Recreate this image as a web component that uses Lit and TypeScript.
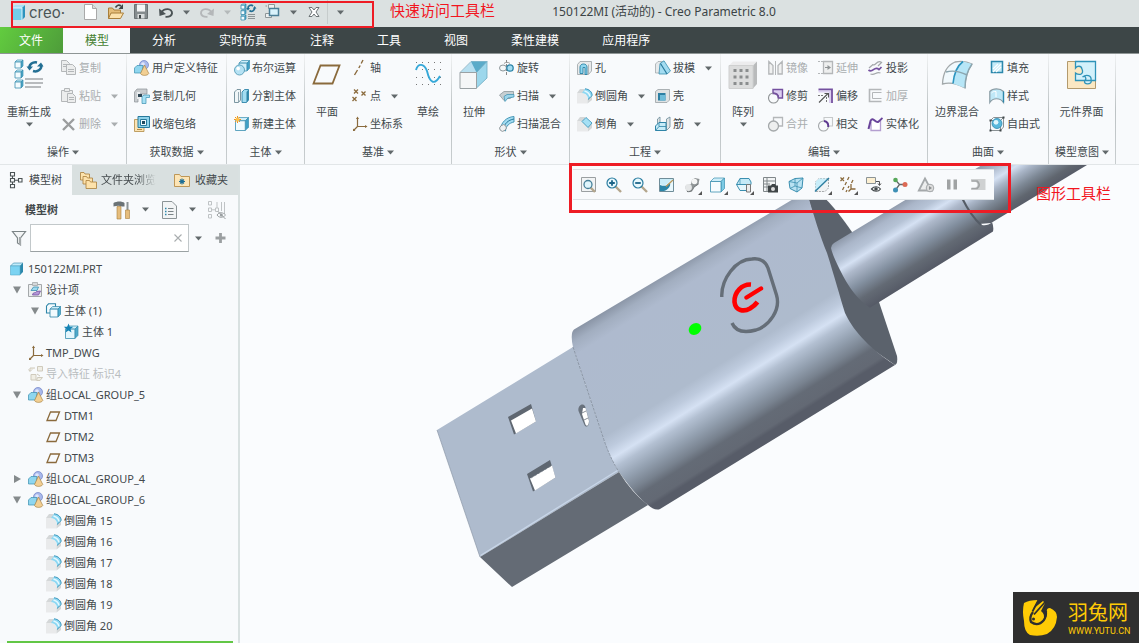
import { LitElement, html, svg, css, nothing, TemplateResult, SVGTemplateResult } from "lit";
import { customElement, property } from "lit/decorators.js";
import { classMap } from "lit/directives/class-map.js";

interface Command { label: string; icon: string; menu?: boolean; off?: boolean; }
interface Group { label: string; columns: (Command | Command[])[]; }
interface Node { label: string; icon: string; level: number; open?: boolean; off?: boolean; }

const BE = "#3a8fb0";
const BR = "#8a6a3c";
const GY = "#b4b7b9";

/* A cube seen from the front-left, shared by many glyphs. */
const cube = (x: number, y: number, s: number, front = "#f4fbfe", side = "#4fa9cb", line = BE) => {
  const d = s * 0.25;
  return svg`
    <path d="M${x} ${y + d} L${x + d} ${y} H${x + s} L${x + s - d} ${y + d} Z" fill="#cfeef9" stroke=${line} stroke-width=".7"/>
    <path d="M${x + s - d} ${y + d} L${x + s} ${y} V${y + s - d} L${x + s - d} ${y + s} Z" fill=${side} stroke=${line} stroke-width=".7"/>
    <path d="M${x} ${y + d} H${x + s - d} V${y + s} H${x} Z" fill=${front} stroke=${line} stroke-width=".8"/>`;
};

const xMark = (x: number, y: number, s: number, c: string, w: number) =>
  svg`<path d="M${x} ${y} l${s} ${s} M${x + s} ${y} l${-s} ${s}" stroke=${c} stroke-width=${w}/>`;

const corner = svg`<path d="M18 14 V18 H14 Z" fill="#555"/>`;

const lens = svg`<path d="M9.500 9.500 L15 15" stroke="#b3a58c" stroke-width="2.400"/>`;

const csys = svg`<path d="M5.500 2 V10.500 H14 M5.500 10.500 L2 14" fill="none" stroke=${BR} stroke-width="1.200"/>
  <path d="M4 3 L5.500 .5 L7 3 M13 9 L15.500 10.500 L13 12 M1 12.500 V15 H3.500" fill=${BR}/>`;

const glyphs: Record<string, SVGTemplateResult> = {
  app: svg`<path d="M1 4 L4 1 H14 L11 4 Z" fill="#a8e2f5"/><path d="M11 4 L14 1 V13 L11 16 Z" fill="#2b93bd"/><path d="M1 4 H11 V16 H1 Z" fill="#74cdea"/><path d="M1 4 H11 V16" fill="none" stroke="#dff6fd"/>`,
  new: svg`<path d="M1.500 .5 H9.500 L13.500 4.500 V15.500 H1.500 Z" fill="#fff" stroke="#a9a9a9"/><path d="M9.500 .5 V4.500 H13.500" fill="#ddd" stroke="#a9a9a9"/>`,
  open: svg`<path d="M.5 14.500 V4 H4.500 L6 6 H12.500 V9" fill="#e5bd78" stroke="#a97f3b"/><path d="M3 9 H15.500 L12.500 14.500 H.5 Z" fill="#fde2ab" stroke="#a97f3b"/><path d="M7.500 3.500 C9 1 11 .5 13 2" stroke="#3f4747" stroke-width="1.600" fill="none"/><path d="M15 0 V5 H10.500 Z" fill="#3f4747"/>`,
  save: svg`<path d="M1.500 .5 H14.500 V14.500 H1.500 Z" fill="#858c8e" stroke="#6a7173"/><path d="M4 .5 H12 V7.500 H4 Z" fill="#f4f5f5"/><path d="M4.500 10 H11.500 V14.500 H4.500 Z" fill="#d8dcdc"/><path d="M6 11 H8 V14.500 H6 Z" fill="#3f4648"/>`,
  undo: svg`<path d="M3 9 C6 3.500 14.500 4 14 9.500 C13.500 12 11 13 7.500 12.800" fill="none" stroke="#4b5355" stroke-width="1.900"/><path d="M1 4.500 L1.500 12 L8 10 Z" fill="#4b5355"/>`,
  redo: svg`<path d="M13 9 C10 3.500 1.500 4 2 9.500 C2.500 12 5 13 8.500 12.800" fill="none" stroke=${GY} stroke-width="1.900"/><path d="M15 4.500 L14.500 12 L8 10 Z" fill=${GY}/>`,
  regen: svg`${cube(1, 0, 5)}${cube(1, 5.5, 5)}${cube(1, 11, 5)}<path d="M8 10.500 H15 M8 12.500 H15 M8 14.500 H15" stroke="#8c9496"/><path d="M8 4.500 A3 3 0 0 1 13 2 M14.500 4 A3 3 0 0 1 9.500 6.500" fill="none" stroke="#236f93" stroke-width="1.700"/><path d="M6 4 H10 L8 6.500 Z M13 4.500 H16.500 L14.500 2 Z" fill="#236f93"/>`,
  windows: svg`<path d="M3.500 .5 H9.500 V4.500 H3.500 Z M.5 2 H2 M.5 9.500 H6.500 V13.500 H.5 Z" fill="#eef1f1" stroke="#8f9798"/><path d="M4.500 4.500 H13.500 V11.500 H4.500 Z" fill="#d8f2fb" stroke="#4b7f97" stroke-width="1.500"/>`,
  closeWin: svg`<path d="M3 3.500 H6 L8 6 L10 3.500 H13 L10 8 L13 12.500 H10 L8 10 L6 12.500 H3 L6 8 Z" fill="#fff" stroke="#6d7476"/>`,
  copy: svg`<g fill="#eceded" stroke=${GY}><path d="M.5 .5 H5.500 L8.500 3.500 V11.500 H.5 Z"/><path d="M5.500 4.500 H11.500 L14.500 7.500 V14.500 H5.500 Z"/></g><path d="M2 4.500 H6 M2 6.500 H5 M7 9.500 H13 M7 11.500 H13" stroke=${GY}/>`,
  paste: svg`<g fill="#eceded" stroke=${GY}><path d="M.5 2.500 H11.500 V13.500 H.5 Z"/><path d="M3.500 .5 H8.500 V3.500 H3.500 Z"/><path d="M6.500 5.500 H11.500 L14.500 8.500 V14.500 H6.500 Z"/></g><path d="M8 9.500 H13 M8 11.500 H13" stroke=${GY}/>`,
  del: xMark(2, 3, 11, "#9b9d9e", 2.4),
  udf: svg`<circle cx="10" cy="5" r="4.500" fill="#a9b9ec" stroke="#6d7fc4" stroke-width=".7"/><circle cx="9" cy="4" r="1.800" fill="#dfe6fb"/><path d="M.5 8 L3 5.500 H9 L8 13 H.5 Z" fill="#8fd6ef" stroke=${BE} stroke-width=".7"/><path d="M10.500 5 L14.800 13.500 C13.500 16 7.500 16 6.500 13.500 Z" fill="#f2cf93" stroke="#ab8748" stroke-width=".7"/>`,
  copyGeom: svg`<path d="M.5 4 L3 1 H13 V6 H4 V14 H.5 Z" fill="#c9cdd0" stroke="#8b9195" stroke-width=".7"/><path d="M3 4 H6 V11 H3 Z" fill="#e9ecee"/><path d="M4 6 H8 V9 H4 Z" fill="#2e4654"/><path d="M8 8.500 L10 7 H15.500 V9.500 H12 V15.500 H8 Z" fill="#a6e0f4" stroke=${BE} stroke-width=".7"/>`,
  shrink: svg`<path d="M.5 3.500 H10 V15.500 H.5 Z" fill="#fbe3b4" stroke="#b08a45" stroke-width=".8"/><path d="M4 .5 H15.500 V11.500 H4 Z" fill="#8fd2ea" stroke="#287a9c"/><path d="M6.500 3.500 H12.500 V9.500 H6.500 Z" fill="#eef9fd" stroke="#287a9c"/><path d="M8 5 H11 V8 H8 Z" fill="#1e4b60"/><path d="M3 13.500 H8" stroke="#b08a45"/>`,
  bool: svg`${cube(5, 0.5, 10.5, "#d3effa", "#3fa0c6")}<circle cx="5.500" cy="10" r="5" fill="#b6e2f4" stroke="#4893b0" stroke-width=".8"/><circle cx="4.200" cy="8.600" r="1.800" fill="#fff"/>`,
  split: svg`<path d="M.5 4 L3 1.500 H6.500 V12 L4.500 14.500 H.5 Z" fill="#f0f6f8" stroke="#6d8a96" stroke-width=".9"/><path d="M4.500 4 V14" stroke="#6d8a96" stroke-width=".7"/><path d="M8 4 L10.500 1.500 H14.500 V12 L12.500 14.500 H8 Z" fill="#a3dcf1" stroke="#2f85a8" stroke-width=".9"/><path d="M12.500 4 L14.500 1.500 V12 L12.500 14.500 Z" fill="#2f85a8"/>`,
  newBody: svg`${cube(1.5, 1.5, 13, "#f2fbfe", "#3fa0c6")}<path d="M3.500 0 V7 M0 3.500 H7 M1 1 L6 6 M6 1 L1 6" stroke="#f0931e" stroke-width="1"/><circle cx="3.500" cy="3.500" r="1.900" fill="#ffc04a"/>`,
  axis: svg`<path d="M2.500 15 L5.500 10 M6.800 8 L8.200 5.500 M9.200 3.500 L11 0" stroke=${BR} stroke-width="1.400"/>`,
  point: svg`${xMark(2, 1.5, 4, BR, 1.3)}${xMark(9.5, 3.5, 4, BR, 1.3)}${xMark(.5, 9, 4, BR, 1.3)}`,
  csys,
  revolve: svg`<path d="M7.500 0 V16" stroke="#888" stroke-dasharray="3 1"/><ellipse cx="4" cy="8" rx="3.500" ry="3" fill="#f4f7f8" stroke="#8d979b"/><ellipse cx="11" cy="8" rx="3.200" ry="3.200" fill="#a3dcf1" stroke="#2f85a8" stroke-width="1.300"/><path d="M5 3.500 C6 2 10 2 11 3.500" fill="none" stroke="#999"/>`,
  sweep: svg`<path d="M.5 7 L5 3.500 H14.500 V8 L11 10.500 H8 L5 12.500 Z" fill="#c6cfd2" stroke="#8d979b" stroke-width=".8"/><path d="M5 8.500 L8 6.500 H15 V9 L9 10 L6 13.500 Z" fill="#9dd5ea" stroke=${BE} stroke-width=".7"/>`,
  blend: svg`<path d="M1.500 13 C2 7 7 1 15 .5 V6 C10 7 7 10 6.500 15 Z" fill="#a3dcf1" stroke=${BE} stroke-width=".9"/><path d="M4.500 13 C5 8 9 4 15 3" fill="none" stroke="#287a9c"/><ellipse cx="4" cy="12" rx="3.500" ry="3" transform="rotate(-40 4 12)" fill="#f0f1f2" stroke="#8d979b" stroke-width=".9"/>`,
  hole: svg`<path d="M.5 4.500 L3 1.500 H14.500 V11 L11.500 14.500 H.5 Z" fill="#e8eaeb" stroke="#9aa1a4" stroke-width=".8"/><path d="M3 13.500 V7 C3 3 10 3 10 7 V14.500 H8 V7.500 H6 V13.500 Z" fill="#8fd6ef" stroke="#2682a6" stroke-width=".9"/><path d="M11.500 4.500 V14" stroke="#9aa1a4" stroke-width=".7"/>`,
  round: svg`<path d="M0 5 H6 C9 6 10.500 8 10.500 11 V15.500 H0 Z" fill="#e9eaeb"/><path d="M0 5 L3 1 H8 L6 5 Z M10.500 11 L15 7 V12 L10.500 15.500 Z" fill="#d4d7d8"/><path d="M5 5 L8 .8 C12.500 1.200 15 4 15.200 7.500 L11 11.500 C11 8 9 5.500 5 5 Z" fill="#8ed8f3"/><path d="M8 .8 C12.500 1.200 15 4 15.200 7.500 L11 11.500" fill="none" stroke="#2f8fb5" stroke-width=".9"/><path d="M7.500 3 C11 4 12.500 5.500 13 8.500" fill="none" stroke="#e4f8ff" stroke-width="1.500"/>`,
  chamfer: svg`<path d="M0 5 H6 L11 10.500 V15.500 H0 Z" fill="#e9eaeb"/><path d="M0 5 L3 1 H9 L6 5 Z M11 11 L15 7 V12 L11 15.500 Z" fill="#d4d7d8"/><path d="M5 5.500 L9 1.500 L15 7 L11 11.500 Z" fill="#a5e0f5" stroke="#2f8fb5" stroke-width=".8"/>`,
  draft: svg`<path d="M.5 4 L3 1.500 H9 L7 13 H.5 Z" fill="#e6eaec" stroke="#9aa1a4" stroke-width=".7"/><path d="M5 3.500 L9 .8 L15.500 11 L12 14 H4 Z" fill="#a3dcf1" stroke=${BE} stroke-width=".8"/><path d="M5.500 3.500 L12 14" stroke="#287a9c" stroke-width="1.200"/>`,
  shell: svg`<path d="M.5 3.500 L3 1.500 H14.500 V12 L12 14.500 H.5 Z" fill="#dfe2e3" stroke="#9aa1a4" stroke-width=".8"/><path d="M3 5 H10.500 V12.500 H3 Z" fill="#2d7fa3"/><path d="M5 7 H10.500 V12.500 H5 Z" fill="#6fbcd9"/>`,
  rib: svg`<path d="M2.500 9 V3 L5 1 V8 Z M11.500 8 V3 L15 1 V11 L11.500 14.500 Z" fill="#e2e5e6" stroke="#6b8c99" stroke-width=".8"/><path d="M.5 10 L4 6.500 H11 V14.500 H.5 Z" fill="#c7ecf8" stroke="#2f85a8"/><path d="M4 6.500 V10.500 L.5 14.500 M4 10.500 H11" fill="none" stroke="#2f85a8" stroke-width=".8"/>`,
  mirror: svg`<path d="M.8 1.500 L5 5.500 V14 H.8 Z M14.200 1.500 L10 5.500 V14 H14.200 Z" fill="#f0f1f1" stroke=${GY} stroke-width="1.300"/><path d="M7.500 1 V15" stroke=${GY}/>`,
  trim: svg`<path d="M5 1.500 H14.500 V10 H10.500 C10.500 7.500 9 5.500 5 5.500 Z" fill="#dccff0" stroke="#74509f" stroke-width="1.400"/><circle cx="5.500" cy="10" r="5" fill="none" stroke="#8e9294" stroke-width="1.100"/><path d="M5 5 C9 5 10.500 7.500 10.500 10.500" fill="none" stroke="#74509f" stroke-width="1.500"/>`,
  merge: svg`<path d="M5.500 5 V1.500 H14.500 V10 H10" fill="none" stroke=${GY} stroke-width="1.300"/><circle cx="5.500" cy="10" r="5" fill="#eeefef" stroke="#a4a8aa" stroke-width="1.300"/>`,
  extend: svg`<path d="M5.500 1.500 H14.500 V13.500 H5.500 Z" fill="#eeefef" stroke=${GY} stroke-width="1.300"/><path d="M0 1.500 H5 M0 13.500 H5" stroke=${GY} stroke-dasharray="2 1"/><path d="M7 7.500 H12" stroke="#8f9395"/><path d="M9.500 5 L13 7.500 L9.500 10 Z" fill="#8f9395"/>`,
  offset: svg`<path d="M.5 1.500 H14 V15" fill="none" stroke="#74509f" stroke-width="1.800"/><path d="M.5 3.500 H12 V15" fill="none" stroke="#dccff0" stroke-width="2"/><path d="M0 7.500 H6 M8.500 9 V15" stroke="#777" stroke-dasharray="2 1" /><path d="M1 14.500 L10 5.500 M6.500 5.500 H10.500 V9.500" fill="none" stroke="#555" stroke-width="1.100"/>`,
  intersect: svg`<path d="M6 5 V1.500 H14.500 V10 H11" fill="none" stroke="#c6c9ca" stroke-width="1.100"/><circle cx="5.500" cy="10" r="5" fill="none" stroke="#a4a8aa" stroke-width="1.100"/><path d="M6 5 C9 5.500 10.500 8 10.300 11" fill="none" stroke="#5d3890" stroke-width="2"/>`,
  project: svg`<path d="M4 4.500 C8 7 8 0 13 2 M1 8 L5 4.500 M10 6 L14 2" fill="none" stroke="#a4a8aa" stroke-width="1.200"/><path d="M.5 10 C5 14 6 5 11 9.500 L13.500 7" fill="none" stroke="#74509f" stroke-width="1.700"/><path d="M2.500 14 C7 16 8 11 12.500 13" fill="none" stroke="#a4a8aa" stroke-width="1.200"/>`,
  thicken: svg`<path d="M13.500 1.500 H1.500 V13.500 H13.500" fill="none" stroke=${GY} stroke-width="1.600"/><path d="M13.500 4.500 H4.500 V10.500 H13.500" fill="none" stroke=${GY}/>`,
  solidify: svg`<path d="M3 6 V14.500 H12.500 V5" fill="#fff" stroke="#b49fd0" stroke-width="1.300"/><path d="M.5 13 L2.500 5 C5 0 7 7 10 6 C12 5 13 3 14.500 2" fill="none" stroke="#69439a" stroke-width="2"/>`,
  fill: svg`<path d="M2.500 1.500 H13.500 V12.500 H2.500 Z" fill="#c4ebf8" stroke="#2c88ac" stroke-width="1.500"/><path d="M4 9 L9 4 M4 12 L12 4 M7 12 L12 7" stroke="#fff" stroke-width="1.200"/>`,
  style: svg`<path d="M.8 14.500 V3.500 C4 0 11 0 14.500 3.500 V14.500 C11 9.500 4 9.500 .8 14.500 Z" fill="#bfe8f7" stroke="#8a9ca4" stroke-width="1.200"/><path d="M2.500 5 C4 3.500 5 3.500 7 3.500 V9" stroke="#fff" fill="none"/><path d="M14.500 3.500 V14.500" stroke="#2c88ac" stroke-width="1.300"/>`,
  freestyle: svg`<path d="M1.500 4.500 L4.500 1.500 H14.500 V11 L11.500 14.500 H1.500 Z M1.500 4.500 H11.500 V14.500 M11.500 4.500 L14.500 1.500" fill="none" stroke="#8a9194"/><circle cx="8" cy="7.500" r="5" fill="#59b8dc" stroke="#2c88ac" stroke-width=".8"/><circle cx="7" cy="6.300" r="2.400" fill="#dff5fc"/><path d="M.5 3.500 H2.500 V5.500 H.5 Z M13.500 .5 H15.500 V2.500 H13.500 Z M.5 13.500 H2.500 V15.500 H.5 Z M10.500 13.500 H12.500 V15.500 H10.500 Z" fill="#3f4648"/>`,
  tree: svg`<path d="M2.500 .5 H6.500 V4 H2.500 Z M2.500 6.500 H6.500 V10 H2.500 Z M2.500 12.500 H6.500 V15.800 H2.500 Z M10.500 6.500 H14 V10 H10.500 Z M6.500 8.300 H10.500 M4.500 4 V6.500 M4.500 10 V12.500" fill="none" stroke="#4b5355" stroke-width="1.100"/>`,
  folders: svg`<g stroke="#a97f3b" stroke-width=".8" fill="#fde2ab"><path d="M.5 .5 H4 L5 2 H9.500 V8 H.5 Z"/><path d="M3 4.500 H6.500 L7.500 6 H12.500 V12 H3 Z"/><path d="M6 8.500 H9.500 L10.500 10 H16.500 V16.500 H6 Z"/></g>`,
  favorites: svg`<path d="M.5 14.500 V2.500 H5.500 L7 4.500 H15.500 V14.500 Z" fill="#fde5b6" stroke="#b98e49" stroke-width=".9"/><path d="M8 6.500 V12.500 M5 9.500 H11 M6 7.500 L10 11.500 M10 7.500 L6 11.500" stroke="#1f6f96" stroke-width="1.100"/>`,
  hammer: svg`<path d="M3 4.500 H7 V17 H3 Z" fill="#e6bd7c" stroke="#a97f3b" stroke-width=".6"/><path d="M-.5 1 C3 -1 8 -1 10.500 1 V4.500 H8 C6 3.500 3 3.500 -.5 4.500 Z" fill="#6b7376"/><path d="M12.500 0 H14.500 V8 H12.500 Z" fill="#8c9496"/><path d="M11.500 8 H15.500 V16.500 H11.500 Z" fill="#e6bd7c" stroke="#a97f3b" stroke-width=".6"/>`,
  list: svg`<path d="M1.500 -.5 H11 L15.500 4 V16.500 H1.500 Z" fill="#f2f4f5" stroke="#8c9496"/><path d="M7 6.500 H12.500 M7 9.500 H12.500 M7 12.500 H12.500" stroke="#7b8487"/><path d="M4 5.800 H5.500 V7.200 H4 Z M4 8.800 H5.500 V10.200 H4 Z M4 11.800 H5.500 V13.200 H4 Z" fill="#2c88ac"/>`,
  treeHide: svg`<g fill="none" stroke="#bfc3c5"><path d="M.5 -.5 H3.500 V3 H.5 Z M.5 6 H3.500 V9.500 H.5 Z M.5 12.500 H3.500 V16 H.5 Z M7.500 6 H10.500 V9.500 H7.500 Z M3.500 7.800 H7.500 M9 0 V6 M13.500 0 V9 M16.500 0 V12"/></g><path d="M9 13 C11 10 15 10 17.500 13 C15 16 11 16 9 13 Z M10 9.500 L17.500 17" fill="none" stroke="#9a9fa1"/><circle cx="13.300" cy="13" r="1.500" fill="#9a9fa1"/>`,
  funnel: svg`<path d="M2.500 1.500 H15.500 L10.500 8 V15 L7.500 13 V8 Z" fill="#f3f5f6" stroke="#7d8587" stroke-width="1.200"/><path d="M9 7 H11 V15 H9 Z" fill="#a4a9ab"/>`,
  plus: svg`<path d="M8.500 3 V13 M3.500 8 H13.500" stroke="#9b9fa1" stroke-width="2.800"/>`,
  clear: xMark(4.5, 4.5, 7, "#a9adaf", 1.1),
  part: svg`<path d="M.5 5 L3.500 2 H13 L10 5 Z" fill="#c2ecfa" stroke="#2f85a8" stroke-width=".6"/><path d="M10 5 L13 2 V11 L10 14 Z" fill="#2c88ac"/><path d="M.5 5 H10 V14 H.5 Z" fill="#7cd3f2" stroke="#55abc9" stroke-width=".6"/>`,
  design: svg`<path d="M.5 2.500 H13.500 V14.500 H.5 Z" fill="#eceeef" stroke="#a4a8aa"/><path d="M4.500 .5 H9.500 V3.500 H4.500 Z" fill="#d5d8da" stroke="#a4a8aa" stroke-width=".8"/><path d="M3 8.500 L5.500 5 H10.500 L9 8.500 Z" fill="#9ed9ef" stroke=${BE} stroke-width=".8"/><path d="M4.500 13 C5.500 9 7.500 12 8.500 9.500 L12.500 9 L10.500 13 Z" fill="#b497d8" stroke="#74509f" stroke-width=".8"/>`,
  bodies: svg`<path d="M.5 3 L2.500 .8 H9.500 V10 H.5 Z" fill="#f4fbfe" stroke="#2f85a8" stroke-width="1.100"/>${cube(4, 3.5, 10.5, "#f2fbfe", "#4fb2d6", "#2f85a8")}`,
  body: svg`${cube(1.5, 2, 12.5, "#e4f6fd", "#4fa9cb")}<path d="M4.500 -.5 L5.800 2.800 H9.300 L6.500 5 L7.500 8.500 L4.500 6.500 L1.500 8.500 L2.500 5 L-.3 2.800 H3.200 Z" fill="#1583b5"/>`,
  import: svg`<g fill="#f0eee5" stroke="#cfcabc"><path d="M9.500 .5 H14.500 V5 H9.500 Z M3 8.500 H8 V14 H3 Z M9.500 11.500 H14.500 L12 14.500 H8.500 Z"/><path d="M2 5 V2 H7 M.5 3.500 L2 5.500 L4 3.500 M9 8 L12 10"/></g>`,
  plane: svg`<path d="M4.500 4 H13.500 L10 12.500 H1 Z" fill="none" stroke=${BR} stroke-width="1.300"/>`,
  refit: svg`<path d="M1.500 .5 H15.500 V14.500 H1.500 Z" fill="#f2f4f5" stroke="#9a9fa1"/><path d="M10.500 10.500 L15 15" stroke="#b3a58c" stroke-width="2.400"/><circle cx="8" cy="7.500" r="4" fill="#dff5fc" stroke="#47819a" stroke-width="1.300"/>`,
  zoomIn: svg`${lens}<circle cx="6" cy="6" r="5" fill="#e8f8fd" stroke="#2c7ea1" stroke-width="1.200"/><path d="M6 3.200 V8.800 M3.200 6 H8.800" stroke="#1b6488" stroke-width="1.800"/>`,
  zoomOut: svg`${lens}<circle cx="6" cy="6" r="5" fill="#e8f8fd" stroke="#2c7ea1" stroke-width="1.200"/><path d="M3.200 6 H8.800" stroke="#1b6488" stroke-width="1.800"/>`,
  repaint: svg`<path d="M1.500 1.500 H15.500 V14.500 H1.500 Z" fill="#e9f8fd" stroke="#6f8d99"/><path d="M2 7 C6 9 9 8 13 3 H15 V2 H2 Z" fill="#c9edf9"/><path d="M2 14 L2 8 C6 9.500 9 9 10 7 L12 6 C13 9 10 13 6 14 Z" fill="#2b86a9"/><path d="M8 9.500 L15 3" stroke="#b8975b" stroke-width="1.300"/>`,
  shade: svg`<path d="M1 10 C3 8 5 8 7 7 L8 3 L11 1 L15.500 2 L14.500 7 L10 10 L8 14.500 H3 Z" fill="#8f9496"/><circle cx="4.500" cy="10.500" r="3.400" fill="#e4e6e7"/><circle cx="10.500" cy="4.500" r="2.800" fill="#f4f5f5"/><path d="M3 14.500 C8 15.500 9 12 10 10 L14.500 7" fill="none" stroke="#6d7375"/>${corner}`,
  styleBox: svg`${cube(.5, 1, 14, "#f7fcfe", "#7dcbe5")}${corner}`,
  views: svg`<path d="M.5 7.500 L4 1.500 H13 L15 5 V7.500 Z" fill="#c5eaf7" stroke=${BE}/><path d="M.5 7.500 H11 V13.500 H4 Z" fill="#e6f6fc" stroke=${BE}/><path d="M4 1.500 V7.500" stroke=${BE} stroke-width=".7"/><path d="M10.500 7.500 H14.500 V15 H10.500 Z" fill="#eee" stroke="#777"/>${corner}`,
  viewMgr: svg`<path d="M1.500 .5 H13.500 V14.500 H1.500 Z" fill="#f2f4f5" stroke="#80878a"/><path d="M2 4 H13 M2 7 H8 M2 10 H6 M5 1 V14" stroke="#80878a"/><path d="M6 8.500 H9 L10 7 H13 L14 8.500 H16 V15.500 H6 Z" fill="#3f4547"/><circle cx="11" cy="12" r="2" fill="#ddd"/>`,
  persp: svg`<path d="M1 4.500 L7 1.500 L15 1 L14 11 L9 15 L2 11.500 Z" fill="#b9e2f2" stroke=${BE}/><path d="M1 4.500 L9 6 V15 M9 6 L15 1 M7 2 V9 L2 11.500 M7 9 L14 11" fill="none" stroke=${BE} stroke-width=".8"/>`,
  section: svg`<path d="M1.500 5 L5 1.500 H14.500 V11 L11 14.500 H1.500 Z" fill="#f1f3f4" stroke="#a4a8aa" stroke-dasharray="2 1"/><path d="M1.500 5 L5 1.500 H14 L1.500 14 Z" fill="#c9edf9"/><path d="M1 14.500 L15 1" stroke="#2c7ea1" stroke-width="1.400"/>${corner}`,
  datums: svg`${xMark(.5, .5, 3.5, BR, 1.2)}<path d="M9 0 L7.500 3 M6.500 5 L5 8 M4 10 L2.500 13 M13 3 L11.500 6 M9 9 L8 11 M7 13 L6 15 M11 7 V12 H15.500 M11 12 L8.500 14.500" fill="none" stroke=${BR} stroke-width="1.300"/>${corner}`,
  annot: svg`<path d="M.5 .5 H9.500 V6.500 H.5 Z" fill="#fdf0d2" stroke="#8c9496"/><path d="M10 4.500 H13.500 V8 M12 6.500 L13.500 8.500 L15 6.500" fill="none" stroke="#555"/><path d="M5.500 12 C8 9 12.500 9 14.500 12 C12.500 15 8 15 5.500 12 Z" fill="#fff" stroke="#454b4d" stroke-width="1.200"/><circle cx="10" cy="12" r="1.800" fill="#454b4d"/>`,
  spin: svg`<path d="M3.500 3 L7.500 7.500 L3.500 13 M7.500 7.500 H13" fill="none" stroke="#62686a" stroke-width="1.300"/><circle cx="3.500" cy="3" r="2.300" fill="#57a85a"/><circle cx="13" cy="7.500" r="2.500" fill="#dc6a55"/><circle cx="3.500" cy="13" r="2.500" fill="#3d8fb5"/>`,
  analysis: svg`<path d="M7 1.500 L13.500 13.500 H.8 Z" fill="#eceded" stroke="#a4a8aa" stroke-width="1.800"/><circle cx="12" cy="11" r="3.800" fill="#ddd" stroke="#a4a8aa"/><path d="M11 9 L14 11 L11 13 Z" fill="#8d9193"/>`,
  pause: svg`<path d="M3 2.500 H6.500 V12.500 H3 Z M9.500 2.500 H13 V12.500 H9.500 Z" fill="#a0a3a4"/>`,
  stop: svg`<path d="M1 2 H15.500 V13 H1 V11 H5 C8 10 8 5.500 5 4.500 H1 Z" fill="#cfd1d2"/><path d="M1.500 4 H7 C10 6.500 10 9 7 11.500 H1.500" fill="none" stroke="#a2a5a6" stroke-width="1.700"/>`,
};

const bigGlyphs: Record<string, SVGTemplateResult> = {
  regenBig: svg`${cube(1, 0, 8)}${cube(1, 10, 8)}${cube(1, 20, 8)}<path d="M11 19 H29 M11 23 H29 M11 27 H27" stroke="#a2a7a9" stroke-width="1.700"/><path d="M15.500 8 A6 5 0 0 1 23 2.500 M27 5 A6 5 0 0 1 19 11" fill="none" stroke="#236f93" stroke-width="2.500"/><path d="M12.500 6.500 H19 L15.500 10.500 Z M23 6.500 H29.500 L27 2.500 Z" fill="#236f93"/>`,
  planeBig: svg`<path d="M8.500 5.500 H27.500 L20.500 23.500 H1.500 Z" fill="none" stroke=${BR} stroke-width="1.800"/>`,
  sketchBig: svg`<path d="M3 2.500 H28 M3 9.500 H28 M3 17.500 H28 M3 24.500 H28" stroke="#777" stroke-width="1.100" stroke-dasharray="1 5"/><path d="M3 10 C5 3 11 3 14 11 C17 24 22 25 27 16" fill="none" stroke="#35a8d8" stroke-width="1.900"/>`,
  extrudeBig: svg`<path d="M1 12.500 L12 1.500 H28 L17.500 12.500 Z" fill="#b7dff0" stroke="#8fb3c2" stroke-width=".8"/><path d="M12 1.500 H28 L17.500 12.500 Z" fill="#5aabc9"/><path d="M17.500 12.500 L28 1.500 V18 L17.500 28 Z" fill="#9cd7ec" stroke="#6da9c0" stroke-width=".8"/><path d="M1 12.500 H17.500 V28.500 H1 Z" fill="#f5f6f7" stroke="#9aa1a4"/>`,
  patternBig: svg`<path d="M1 5.500 L5 1.500 H29 L25 5.500 Z" fill="#ececed"/><path d="M25 5.500 L29 1.500 V24 L25 28.500 Z" fill="#b9bbbc"/><path d="M1 5.500 H25 V28.500 H1 Z" fill="#dcdddd" stroke="#cfd0d0"/><path d="M5.500 9 H8.500 V12 H5.500 Z M11.500 9 H14.500 V12 H11.500 Z M17.500 9 H20.500 V12 H17.500 Z M5.500 15.500 H8.500 V18.500 H5.500 Z M11.500 15.500 H14.500 V18.500 H11.500 Z M17.500 15.500 H20.500 V18.500 H17.500 Z M5.500 22 H8.500 V25 H5.500 Z M11.500 22 H14.500 V25 H11.500 Z M17.500 22 H20.500 V25 H17.500 Z" fill="#8a8d8e"/>`,
  boundaryBig: svg`<path d="M.5 24 C1 12 6 5 13 2 C18 1 24 1 30 4 C25 11 23 18 23 28 C16 24 8 22 .5 24 Z" fill="#f1f9fd" stroke="#a2a8aa" stroke-width="1.300"/><path d="M21 1.500 L30 4 C25 11 23 18 23 28 L11 23.500 C12 14 15 6 21 1.500 Z" fill="#b7e6f7"/><path d="M21 1.500 C15 6 12 14 11 23.500" fill="none" stroke="#2c95c0" stroke-width="1.600"/><path d="M4 12 C11 10 19 12 25 15 M30 4 C25 11 23 18 23 28" fill="none" stroke="#8ba5af" stroke-width="1.400"/>`,
  interfaceBig: svg`<path d="M.5 1.500 H28.500 V28.500 H.5 Z" fill="#fbe8c3" stroke="#b39a6d"/><path d="M8.500 1.500 H28.500 V20.500 H24 C26 25 15 25 18 20.500 C20 18 18 15 15.500 17 C19 14 25 15 24 20.500 H8.500 V13 C13 16 17 14 15 9 C14 5 10 6 8.500 8 Z" fill="#d3f1fb" stroke="#2f93b8" stroke-width="1.300"/>`,
};

const icon = (name: string) => html`<svg class="icon" viewBox="0 0 16 16" aria-hidden="true">${glyphs[name]}</svg>`;
const bigIcon = (name: string) => html`<svg class="big-icon" viewBox="0 0 30 30" aria-hidden="true">${bigGlyphs[name]}</svg>`;
const caret = () => html`<svg class="caret" viewBox="0 0 7 5" aria-hidden="true"><path d="M0 .5 H7 L3.500 4.500 Z" fill="currentColor"/></svg>`;

const shared = css`
  * { box-sizing: border-box; }
  button, input {
    font: inherit; color: inherit; background: none; border: 0; margin: 0; padding: 0;
  }
  button { display: flex; align-items: center; white-space: nowrap; cursor: default; }
  .icon { width: 16px; height: 16px; flex: none; display: block; overflow: visible; }
  .caret { width: 7px; height: 5px; flex: none; display: block; color: #62696b; }
`;

@customElement("quick-bar")
export class QuickBar extends LitElement {
  static styles = [shared, css`
    :host { display: block; }
    .bar { display: flex; align-items: center; height: 27px; padding: 0 0 3px 11px; background: #dbe1e1; }
    .brand { display: flex; align-items: center; gap: 2px; width: 63px; font: 15px Inter, sans-serif; color: #4a5456; }
    .tools { display: flex; align-items: center; gap: 9px; margin-left: 9px; }
    .last { width: 22px; height: 24px; border-right: 1px solid #c6cccc; }
    .off .caret { color: #b4b9ba; }
    .title { flex: 1; text-align: center; padding-right: 155px; font-size: 12px; font-weight: 400; margin: 0; color: #3b4446; white-space: nowrap; }
  `];
  private tool(name: string, label: string, cls = "") {
    return html`<button class=${cls} aria-label=${label}>${name ? icon(name) : caret()}</button>`;
  }
  render() {
    return html`<header class="bar">
      <div class="brand">${icon("app")}<span>creo·</span></div>
      <div class="tools">
        ${this.tool("new", "新建")}${this.tool("open", "打开")}${this.tool("save", "保存")}
        ${this.tool("undo", "撤销")}${this.tool("", "撤销列表")}
        ${this.tool("redo", "重做")}${this.tool("", "重做列表", "off")}
        ${this.tool("regen", "重新生成")}${this.tool("windows", "窗口")}${this.tool("", "窗口列表")}
        ${this.tool("closeWin", "关闭", "last")}${this.tool("", "自定义")}
      </div>
      <h1 class="title">150122MI (活动的) - Creo Parametric 8.0</h1>
    </header>`;
  }
}

@customElement("ribbon-tabs")
export class RibbonTabs extends LitElement {
  static styles = [shared, css`
    :host { display: block; }
    .tabs { display: flex; height: 27px; background: #3d4647; border-bottom: 1px solid #8e9595; font-size: 12px; color: #fff; }
    .tab { padding: 1px 21px 0 22px; }
    .file { padding: 1px 20px 0 19px; background: linear-gradient(120deg, #62cc3f, #4e9c3a); }
    .active { background: #f8fafc; color: #448030; }
  `];
  render() {
    const names = ["文件", "模型", "分析", "实时仿真", "注释", "工具", "视图", "柔性建模", "应用程序"];
    return html`<nav class="tabs">${names.map((n, i) =>
      html`<button class=${classMap({ tab: true, file: i === 0, active: i === 1 })}>${n}</button>`)}</nav>`;
  }
}

const groups: Group[] = [
  { label: "操作", columns: [
    { label: "重新生成", icon: "regenBig", menu: true },
    [{ label: "复制", icon: "copy", off: true }, { label: "粘贴", icon: "paste", off: true, menu: true }, { label: "删除", icon: "del", off: true, menu: true }]] },
  { label: "获取数据", columns: [[{ label: "用户定义特征", icon: "udf" }, { label: "复制几何", icon: "copyGeom" }, { label: "收缩包络", icon: "shrink" }]] },
  { label: "主体", columns: [[{ label: "布尔运算", icon: "bool" }, { label: "分割主体", icon: "split" }, { label: "新建主体", icon: "newBody" }]] },
  { label: "基准", columns: [
    { label: "平面", icon: "planeBig" },
    [{ label: "轴", icon: "axis" }, { label: "点", icon: "point", menu: true }, { label: "坐标系", icon: "csys" }],
    { label: "草绘", icon: "sketchBig" }] },
  { label: "形状", columns: [
    { label: "拉伸", icon: "extrudeBig" },
    [{ label: "旋转", icon: "revolve" }, { label: "扫描", icon: "sweep", menu: true }, { label: "扫描混合", icon: "blend" }]] },
  { label: "工程", columns: [
    [{ label: "孔", icon: "hole" }, { label: "倒圆角", icon: "round", menu: true }, { label: "倒角", icon: "chamfer", menu: true }],
    [{ label: "拔模", icon: "draft", menu: true }, { label: "壳", icon: "shell" }, { label: "筋", icon: "rib", menu: true }]] },
  { label: "编辑", columns: [
    { label: "阵列", icon: "patternBig", menu: true },
    [{ label: "镜像", icon: "mirror", off: true }, { label: "修剪", icon: "trim" }, { label: "合并", icon: "merge", off: true }],
    [{ label: "延伸", icon: "extend", off: true }, { label: "偏移", icon: "offset" }, { label: "相交", icon: "intersect" }],
    [{ label: "投影", icon: "project" }, { label: "加厚", icon: "thicken", off: true }, { label: "实体化", icon: "solidify" }]] },
  { label: "曲面", columns: [
    { label: "边界混合", icon: "boundaryBig" },
    [{ label: "填充", icon: "fill" }, { label: "样式", icon: "style" }, { label: "自由式", icon: "freestyle" }]] },
  { label: "模型意图", columns: [{ label: "元件界面", icon: "interfaceBig" }] },
];

@customElement("model-ribbon")
export class ModelRibbon extends LitElement {
  static styles = [shared, css`
    :host { display: block; }
    .ribbon { display: flex; height: 111px; background: #f8fafc; border-bottom: 1px solid #e2e6e8; color: #42494c; }
    .group {
      display: flex; flex-direction: column; flex: none; border-right: 1px solid;
      border-image: linear-gradient(#f1f3f4, #bcc2c4 50%, #c8cdcf) 1;
    }
    .body { display: flex; justify-content: center; gap: 10px; height: 84px; padding: 0 8px 0 7px; }
    .column { display: grid; grid-template-rows: repeat(3, 28px); justify-items: start; }
    .small { gap: 10px; }
    .face { display: flex; align-items: center; gap: 2px; }
    .big { flex-direction: column; min-width: 30px; padding-top: 6px; line-height: 16px; }
    .big-icon { width: 30px; height: 30px; margin-bottom: 14px; display: block; overflow: visible; }
    .big .caret { margin-top: 2px; }
    .off { color: #a9adaf; }
    .off .caret { color: #a9adaf; }
    .label { justify-content: center; gap: 3px; height: 26px; padding: 2px 6px 0; }
  `];
  private command(c: Command, big = false): TemplateResult {
    return big
      ? html`<button class="big">${bigIcon(c.icon)}<span>${c.label}</span>${c.menu ? caret() : nothing}</button>`
      : html`<button class=${classMap({ small: true, off: !!c.off })} ?disabled=${!!c.off}>
          <span class="face">${icon(c.icon)}<span>${c.label}</span></span>${c.menu ? caret() : nothing}</button>`;
  }
  render() {
    return html`<div class="ribbon">${groups.map(g => html`
      <section class="group" aria-label=${g.label}>
        <div class="body">${g.columns.map(col => Array.isArray(col)
          ? html`<div class="column">${col.map(c => this.command(c))}</div>`
          : this.command(col, true))}</div>
        <button class="label">${g.label}${caret()}</button>
      </section>`)}</div>`;
  }
}

const nodes: Node[] = [
  { label: "150122MI.PRT", icon: "part", level: 0 },
  { label: "设计项", icon: "design", level: 1, open: true },
  { label: "主体 (1)", icon: "bodies", level: 2, open: true },
  { label: "主体 1", icon: "body", level: 3 },
  { label: "TMP_DWG", icon: "csys", level: 1 },
  { label: "导入特征 标识4", icon: "import", level: 1, off: true },
  { label: "组LOCAL_GROUP_5", icon: "udf", level: 1, open: true },
  { label: "DTM1", icon: "plane", level: 2 },
  { label: "DTM2", icon: "plane", level: 2 },
  { label: "DTM3", icon: "plane", level: 2 },
  { label: "组LOCAL_GROUP_4", icon: "udf", level: 1, open: false },
  { label: "组LOCAL_GROUP_6", icon: "udf", level: 1, open: true },
  ...[15, 16, 17, 18, 19, 20].map(n => ({ label: `倒圆角 ${n}`, icon: "round", level: 2 })),
];

@customElement("tree-row")
export class TreeRow extends LitElement {
  @property({ attribute: false }) node!: Node;
  static styles = [shared, css`
    :host { display: block; }
    .row { display: flex; align-items: center; gap: 2px; height: 21px; white-space: nowrap; color: #43494c; }
    .l0, .l1 { padding-left: 10px; }
    .l2 { padding-left: 28px; }
    .l3 { padding-left: 46px; }
    .twist { width: 16px; flex: none; padding-left: 2px; }
    .twist svg { width: 10px; height: 10px; display: block; }
    .off { color: #b9bdbf; }
  `];
  render() {
    const n = this.node;
    const mark = n.open === undefined ? nothing
      : html`<svg viewBox="0 0 10 10"><path d=${n.open ? "M1 1.500 H9 L5 8.500 Z" : "M2 1 V9 L9 5 Z"} fill="#858a8c"/></svg>`;
    const twist = n.level === 0 ? nothing
      : n.open === undefined ? html`<span class="twist"></span>`
      : html`<button class="twist" aria-label=${n.open ? "折叠" : "展开"}>${mark}</button>`;
    return html`<div class="row l${n.level} ${n.off ? "off" : ""}">${twist}${icon(n.icon)}<span>${n.label}</span></div>`;
  }
}

@customElement("model-tree")
export class ModelTree extends LitElement {
  static styles = [shared, css`
    :host { display: flex; flex-direction: column; background: #f8fafc; border-right: 2px solid #d9e1e1; color: #43494c; }
    .tabs { display: flex; height: 30px; background: #d9e0e0; }
    .tab { gap: 5px; padding: 0 10px 0 8px; }
    .tab.on { background: #f8fafc; }
    .fade { mask-image: linear-gradient(90deg, #000 65%, transparent); }
    .head { display: flex; align-items: center; height: 29px; padding: 0 14px 0 25px; gap: 12px; }
    .heading { flex: 1; margin: 0; font-size: 11px; font-weight: 700; }
    .tool { gap: 12px; }
    .find { display: flex; align-items: center; gap: 4px; height: 28px; padding: 0 10px; }
    .field { display: flex; align-items: center; flex: 1; min-width: 0; height: 28px; background: #fff; border: 1px solid #c2c8ca; border-bottom-color: #9aa1a3; }
    .field input { flex: 1; min-width: 0; height: 100%; padding: 0 6px; outline: 0; }
    .field button { margin-right: 2px; }
    .more { padding: 0 6px 0 2px; }
    .rows { list-style: none; margin: 6px 0 0; padding: 0; flex: 1; }
    .end { height: 2px; margin: 0 5px 0 7px; background: #62c746; }
  `];
  render() {
    return html`
      <div class="tabs">
        <button class="tab on">${icon("tree")}模型树</button>
        <button class="tab">${icon("folders")}<span class="fade">文件夹浏览</span></button>
        <button class="tab">${icon("favorites")}收藏夹</button>
      </div>
      <div class="head">
        <h2 class="heading">模型树</h2>
        <button class="tool" aria-label="设置">${icon("hammer")}${caret()}</button>
        <button class="tool" aria-label="显示">${icon("list")}${caret()}</button>
        <button aria-label="隐藏">${icon("treeHide")}</button>
      </div>
      <div class="find">
        ${icon("funnel")}
        <div class="field"><input type="text" aria-label="搜索"><button aria-label="清除">${icon("clear")}</button></div>
        <button class="more" aria-label="搜索选项">${caret()}</button>
        <button aria-label="添加">${icon("plus")}</button>
      </div>
      <ul class="rows">${nodes.map(n => html`<li><tree-row .node=${n}></tree-row></li>`)}</ul>
      <div class="end"></div>`;
  }
}

@customElement("model-view")
export class ModelView extends LitElement {
  static styles = [shared, css`
    :host { display: block; position: relative; background: #fafcfe; overflow: hidden; }
    .scene { position: absolute; top: 0; left: 0; width: 899px; height: 478px; display: block; }
    .graphics { position: absolute; top: 4px; left: 333px; display: flex; align-items: center; gap: 10px; height: 31px; padding: 0 8px 0 7px; background: #f8fafc; border: solid #dce1e4; border-width: 1px 0; }
    .watermark { position: absolute; right: 0; bottom: 0; display: flex; align-items: center; gap: 10px; width: 126px; height: 51px; padding-left: 9px; background: #2f2f2f; color: #ffcb05; }
    .mark { width: 36px; height: 38px; flex: none; }
    .name { font-size: 20px; line-height: 26px; }
    .site { font: 9px/10px Roboto, sans-serif; }
  `];
  render() {
    const tools: [string, string][] = [["refit", "重新调整"], ["zoomIn", "放大"], ["zoomOut", "缩小"], ["repaint", "重画"],
      ["shade", "渲染选项"], ["styleBox", "显示样式"], ["views", "已保存方向"], ["viewMgr", "视图管理器"], ["persp", "透视图"],
      ["section", "截面"], ["datums", "基准显示"], ["annot", "注释显示"], ["spin", "旋转中心"], ["analysis", "仿真"], ["pause", "暂停"], ["stop", "停止"]];
    return html`
      <svg class="scene" viewBox="240 165 899 478" role="img" aria-label="150122MI">
        <defs>
          <linearGradient id="shell" gradientUnits="userSpaceOnUse" x1="571" y1="332" x2="677" y2="501.600">
            <stop offset="0" stop-color="#8a95a6"/><stop offset=".05" stop-color="#a2aec0"/><stop offset=".11" stop-color="#aebace"/>
            <stop offset=".53" stop-color="#aebbcd"/><stop offset=".59" stop-color="#bdcadd"/><stop offset=".645" stop-color="#d5e1f3"/>
            <stop offset=".69" stop-color="#b3c0d2"/><stop offset=".76" stop-color="#94a1b1"/><stop offset=".83" stop-color="#78828f"/>
            <stop offset=".87" stop-color="#646b76"/><stop offset=".93" stop-color="#636974"/><stop offset=".95" stop-color="#575c68"/><stop offset="1" stop-color="#575c68"/>
          </linearGradient>
          <linearGradient id="relief" gradientUnits="userSpaceOnUse" x1="831" y1="245" x2="869.700" y2="306.900">
            <stop offset="0" stop-color="#8f9aab"/><stop offset=".12" stop-color="#aab6c9"/><stop offset=".24" stop-color="#b6c3d6"/>
            <stop offset=".35" stop-color="#d5e1f3"/><stop offset=".46" stop-color="#aeb9cb"/><stop offset=".66" stop-color="#8390a0"/>
            <stop offset=".84" stop-color="#636a74"/><stop offset="1" stop-color="#565b67"/>
          </linearGradient>
          <linearGradient id="wire" gradientUnits="userSpaceOnUse" x1="977" y1="168" x2="1006.700" y2="215.500">
            <stop offset="0" stop-color="#8f9aab"/><stop offset=".14" stop-color="#a8b4c6"/><stop offset=".34" stop-color="#d5e1f3"/>
            <stop offset=".48" stop-color="#a9b5c7"/><stop offset=".68" stop-color="#7d8895"/><stop offset=".86" stop-color="#60666f"/><stop offset="1" stop-color="#565b67"/>
          </linearGradient>
        </defs>

        <path d="M806 190 L818 192 Q832 203 852 232 L879 302 L897 356 Q898 364 895 365 L845 330 Z" fill="#5b626c"/>
        <path d="M574 329.500 L795 198 L808 190 L808 196 C814 216 820 236 827 253 C834 275 840 297 845 313 C852 328 866 346 895 365 L660 509 Q655 511 648 505 Q636 496 619 472 Q607 452 603 437 L573 347 Q570 333 574 329.500 Z" fill="url(#shell)"/>

        <path d="M437 430 L573 347 L603 437 Q609 456 619 472 L480 557 Z" fill="#aebbcd"/>
        <path d="M480 557 L619 472 Q632 493 648 505 L512 587 Z" fill="#646b75"/>
        <path d="M480.500 555.500 L617.500 470.500" stroke="#c8d6e8" stroke-width="1.300"/>
        <path d="M437 430 L480 557" stroke="#8d98a8" stroke-width=".7"/>
        <path d="M573 347 L603 437 Q609 456 619 472" fill="none" stroke="#808b9a" stroke-width=".8" stroke-dasharray="3 1"/>

        <path d="M508 417 L531 404 L536 421.500 L514 434.500 Z M527 474 L550 460 L555.500 477.500 L533 491.500 Z" fill="#5f6771"/>
        <path d="M511 420.500 L532 408.500 L536 421.500 L516 433.500 Z M530 478.500 L552 465.500 L555.500 477.500 L535 490.500 Z" fill="#fff"/>
        <path d="M531 478 L551 466" stroke="#6a727d" stroke-width=".7" stroke-dasharray="3 1"/>
        <path d="M578.500 411 C577.500 405 583 402.500 585 406 L589 420 C590 426 586 429 584 424 Z" fill="#69727d"/>
        <path d="M583 408 L585.500 408 L589 421 C588.500 427 586 427 585 423 L582 414 Z" fill="#fff"/>
        <path d="M582 413 L586 411 M584 420 L588 418" stroke="#69727d" stroke-width=".8"/>

        <path d="M721.800 297 C721 279 736 259 752 259 Q764 257.500 768 268 L776.500 295 C781 310 769 326 756 330 Q737 335 732 323" fill="none" stroke="#656e78" stroke-width="3.400"/>
        <path d="M751 284.500 C742 284 734 292 734.500 302 C735.500 311 744 312 750 308.500 C754 306 756 304 757.500 302" fill="none" stroke="#f00" stroke-width="4.600"/>
        <path d="M746.500 297.500 L761 288.500" stroke="#f00" stroke-width="4.400" stroke-linecap="round"/>
        <ellipse cx="695" cy="329" rx="6.800" ry="5.600" transform="rotate(-40 695 329)" fill="#0f0"/>

        <path d="M982 165 H1087 L991 223 L979 224 Q966 208 955 181 Z" fill="url(#wire)"/>
        <path d="M831 248 Q831 245 834 243 L955 170 Q962 205 982 225 Q988 226 992 222 Q994 227 993 231.500 L870 307.700 Q853 297 840 270 Q832 254 831 248 Z" fill="url(#relief)"/>
        <path d="M962 198 Q971 216 981 225" fill="none" stroke="#555c66" stroke-width="2"/>
      </svg>

      <div class="graphics" role="toolbar" aria-label="图形工具栏">
        ${tools.map(([name, label]) => html`<button aria-label=${label}>${icon(name)}</button>`)}
      </div>

      <div class="watermark">
        <svg class="mark" viewBox="0 0 36 38" aria-hidden="true">
          <path d="M2 4 Q7 1 16 1 L11 10 L21 2 L23 4 L19 12 Q24 16 21 21 Q26 18 25 13 Q24 9 28 9 Q35 12 35 18 Q34 30 25 35 Q17 38 8 36 Q2 33 2 22 Q0 12 2 4 Z" fill="#ffcb05"/>
          <path d="M17 0 L10.500 12.500 M23.500 2.500 L12 15.500" stroke="#2f2f2f" stroke-width="1.800"/>
          <path d="M11 13 Q7 18 9 23 Q16 28 22 21 Q24 18 24 12" fill="none" stroke="#2f2f2f" stroke-width="2.200"/>
          <circle cx="11.500" cy="20" r="1.500" fill="#2f2f2f"/>
        </svg>
        <div><div class="name">羽兔网</div><div class="site">WWW.YUTU.CN</div></div>
      </div>`;
  }
}

@customElement("app-root")
export class AppRoot extends LitElement {
  static styles = css`
    :host {
      display: flex; flex-direction: column; position: relative; min-height: 100vh; overflow: hidden;
      font: 11px/16px "Noto Sans", "Noto Sans CJK SC", sans-serif; background: #f8fafc;
    }
    .work { display: grid; grid-template-columns: 240px 1fr; flex: 1; }
    .frame { position: absolute; box-sizing: border-box; border: 2px solid #ee1c25; pointer-events: none; }
    .quick { left: 11px; top: 1px; width: 363px; height: 27px; }
    .graphic { left: 569px; top: 163px; width: 442px; height: 50px; border-width: 3px; }
    .note { position: absolute; font-size: 15px; line-height: 20px; color: #f2161f; white-space: nowrap; }
    .quick-note { left: 390px; top: 0; }
    .graphic-note { left: 1036px; top: 183px; }
  `;
  render() {
    return html`
      <quick-bar></quick-bar>
      <ribbon-tabs></ribbon-tabs>
      <model-ribbon></model-ribbon>
      <main class="work"><model-tree></model-tree><model-view></model-view></main>
      <div class="frame quick"></div><div class="note quick-note">快速访问工具栏</div>
      <div class="frame graphic"></div><div class="note graphic-note">图形工具栏</div>`;
  }
}
